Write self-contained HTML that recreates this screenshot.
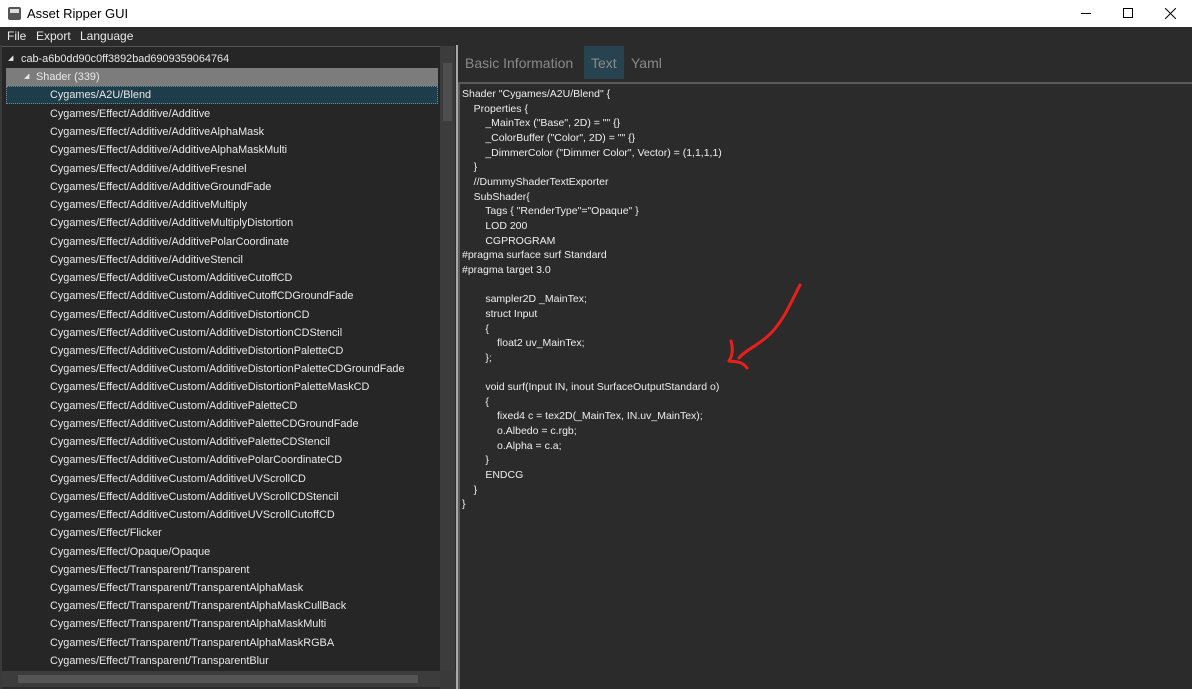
<!DOCTYPE html>
<html><head><meta charset="utf-8"><style>
*{margin:0;padding:0;box-sizing:border-box}
body{width:1192px;height:689px;overflow:hidden;background:#2b2b2b;font-family:"Liberation Sans",sans-serif;position:relative;color:#e8e8e8}
.abs{position:absolute}
#title{left:0;top:0;width:1192px;height:27px;background:#fff;color:#000;font-size:13px}
#menu{left:0;top:27px;width:1192px;height:18px;background:#2b2b2b;font-size:12px}
#left{left:2px;top:46px;width:438px;height:625px;background:#262626;border-top:1px solid #555}
.row{position:absolute;left:4px;width:432px;height:18px;font-size:10.9px;line-height:18px;white-space:nowrap}
#code{left:462px;top:87px;font-size:10.5px;line-height:14.65px;white-space:pre;color:#eee;tab-size:4}
</style></head><body>
<div id="title" class="abs">
 <div class="abs" style="left:8px;top:7px;width:13px;height:13px;background:#555;border-radius:2px"></div>
 <div class="abs" style="left:10px;top:9px;width:9px;height:4px;background:#ddd"></div>
 <div class="abs" style="left:27px;top:6px">Asset Ripper GUI</div>
 <div class="abs" style="left:1081px;top:13px;width:10px;height:1px;background:#000"></div>
 <div class="abs" style="left:1123px;top:8px;width:10px;height:10px;border:1px solid #000"></div>
 <svg class="abs" style="left:1165px;top:8px" width="11" height="11"><path d="M0 0L11 11M11 0L0 11" stroke="#000" stroke-width="1"/></svg>
</div>
<div id="menu" class="abs"><span class="abs" style="left:7px;top:2px">File</span><span class="abs" style="left:36px;top:2px">Export</span><span class="abs" style="left:80px;top:2px">Language</span></div>
<div class="abs" style="left:0;top:45px;width:2px;height:644px;background:#3a3a3a"></div>
<div id="left" class="abs">
 <div class="row" style="top:3px;left:0"><span style="position:absolute;left:6px;font-size:7px">◢</span><span style="position:absolute;left:19px">cab-a6b0dd90c0ff3892bad6909359064764</span></div>
 <div class="row" style="top:21px;background:#7c7c7c"><span style="position:absolute;left:18px;font-size:7px">◢</span><span style="position:absolute;left:30px">Shader (339)</span></div>
 <div class="row" style="top:39px;background:#1e3d4a;border:1px dotted #6a8a96"><span style="position:absolute;left:43px;top:-1px">Cygames/A2U/Blend</span></div>
 <div id="items"></div>
</div>
<div class="abs" style="left:2px;top:671px;width:438px;height:16px;background:#3c3c3c"></div>
<div class="abs" style="left:18px;top:675px;width:400px;height:8px;background:#555"></div>
<div class="abs" style="left:440px;top:46px;width:15px;height:625px;background:#3c3c3c"></div>
<div class="abs" style="left:443px;top:63px;width:9px;height:58px;background:#4e4e4e"></div>
<div class="abs" style="left:440px;top:671px;width:16px;height:18px;background:#3a3a3a"></div>
<div class="abs" style="left:456px;top:45px;width:2px;height:644px;background:#a8a8a8"></div>
<div class="abs" style="left:458px;top:45px;width:734px;height:644px;background:#2b2b2b"></div>
<div class="abs" style="left:584px;top:46px;width:40px;height:33px;background:#26434f"></div>
<div class="abs" style="left:465px;top:55px;font-size:14px;color:#8a8a8a">Basic Information</div>
<div class="abs" style="left:591px;top:55px;font-size:14px;color:#8a8a8a">Text</div>
<div class="abs" style="left:631px;top:55px;font-size:14px;color:#8a8a8a">Yaml</div>
<div class="abs" style="left:458px;top:82px;width:734px;height:2px;background:#5a5a5a"></div>
<div class="abs" style="left:458px;top:84px;width:2px;height:605px;background:#5a5a5a"></div>
<div id="code" class="abs">Shader "Cygames/A2U/Blend" {
    Properties {
        _MainTex ("Base", 2D) = "" {}
        _ColorBuffer ("Color", 2D) = "" {}
        _DimmerColor ("Dimmer Color", Vector) = (1,1,1,1)
    }
    //DummyShaderTextExporter
    SubShader{
        Tags { "RenderType"="Opaque" }
        LOD 200
        CGPROGRAM
#pragma surface surf Standard
#pragma target 3.0

        sampler2D _MainTex;
        struct Input
        {
            float2 uv_MainTex;
        };

        void surf(Input IN, inout SurfaceOutputStandard o)
        {
            fixed4 c = tex2D(_MainTex, IN.uv_MainTex);
            o.Albedo = c.rgb;
            o.Alpha = c.a;
        }
        ENDCG
    }
}</div>
<svg class="abs" style="left:0;top:0" width="1192" height="689"><path d="M800 285C792 300 785 318 772 332C760 345 745 350 739 358M731 341C733 348 733 355 729 361C736 362 742 361 747 368" stroke="#e8201c" stroke-width="3" fill="none" stroke-linecap="round" stroke-linejoin="round"/></svg>
<script>
var n=["Cygames/Effect/Additive/Additive","Cygames/Effect/Additive/AdditiveAlphaMask","Cygames/Effect/Additive/AdditiveAlphaMaskMulti","Cygames/Effect/Additive/AdditiveFresnel","Cygames/Effect/Additive/AdditiveGroundFade","Cygames/Effect/Additive/AdditiveMultiply","Cygames/Effect/Additive/AdditiveMultiplyDistortion","Cygames/Effect/Additive/AdditivePolarCoordinate","Cygames/Effect/Additive/AdditiveStencil","Cygames/Effect/AdditiveCustom/AdditiveCutoffCD","Cygames/Effect/AdditiveCustom/AdditiveCutoffCDGroundFade","Cygames/Effect/AdditiveCustom/AdditiveDistortionCD","Cygames/Effect/AdditiveCustom/AdditiveDistortionCDStencil","Cygames/Effect/AdditiveCustom/AdditiveDistortionPaletteCD","Cygames/Effect/AdditiveCustom/AdditiveDistortionPaletteCDGroundFade","Cygames/Effect/AdditiveCustom/AdditiveDistortionPaletteMaskCD","Cygames/Effect/AdditiveCustom/AdditivePaletteCD","Cygames/Effect/AdditiveCustom/AdditivePaletteCDGroundFade","Cygames/Effect/AdditiveCustom/AdditivePaletteCDStencil","Cygames/Effect/AdditiveCustom/AdditivePolarCoordinateCD","Cygames/Effect/AdditiveCustom/AdditiveUVScrollCD","Cygames/Effect/AdditiveCustom/AdditiveUVScrollCDStencil","Cygames/Effect/AdditiveCustom/AdditiveUVScrollCutoffCD","Cygames/Effect/Flicker","Cygames/Effect/Opaque/Opaque","Cygames/Effect/Transparent/Transparent","Cygames/Effect/Transparent/TransparentAlphaMask","Cygames/Effect/Transparent/TransparentAlphaMaskCullBack","Cygames/Effect/Transparent/TransparentAlphaMaskMulti","Cygames/Effect/Transparent/TransparentAlphaMaskRGBA","Cygames/Effect/Transparent/TransparentBlur"];
var h="";n.forEach(function(t,i){h+='<div class="row" style="top:'+(58+i*18.23)+'px"><span style="position:absolute;left:44px">'+t+'</span></div>'});
document.getElementById("items").innerHTML=h;
</script>
</body></html>
